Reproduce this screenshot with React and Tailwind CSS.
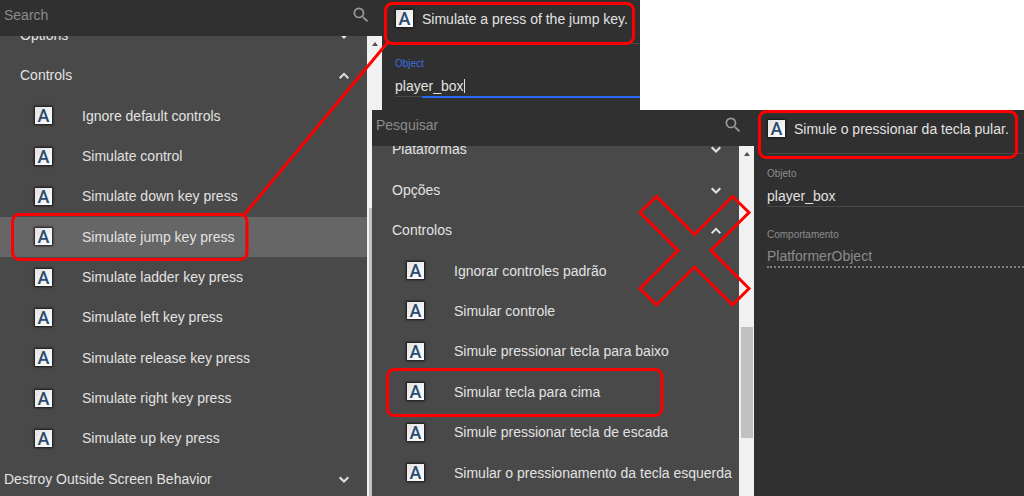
import React from 'react';
import { MdSearch } from 'react-icons/md';

const englishRows = [
  { label: 'Options', type: 'group' },
  { label: 'Controls', type: 'group', open: true },
  { label: 'Ignore default controls' },
  { label: 'Simulate control' },
  { label: 'Simulate down key press' },
  { label: 'Simulate jump key press', selected: true },
  { label: 'Simulate ladder key press' },
  { label: 'Simulate left key press' },
  { label: 'Simulate release key press' },
  { label: 'Simulate right key press' },
  { label: 'Simulate up key press' },
  { label: 'Destroy Outside Screen Behavior', type: 'root' },
];

const portugueseRows = [
  { label: 'Plataformas', type: 'group' },
  { label: 'Opções', type: 'group' },
  { label: 'Controlos', type: 'group', open: true },
  { label: 'Ignorar controles padrão' },
  { label: 'Simular controle' },
  { label: 'Simule pressionar tecla para baixo' },
  { label: 'Simular tecla para cima' },
  { label: 'Simule pressionar tecla de escada' },
  { label: 'Simular o pressionamento da tecla esquerda' },
];

const PlatformerIcon = () => (
  <span
    aria-hidden="true"
    className="flex h-[17px] w-[17px] shrink-0 items-center justify-center bg-gradient-to-br from-[#e2e2e2] to-white font-['Roboto',sans-serif] text-[18px] leading-[17px] font-medium text-[#2b4b70] shadow-[0_0_2px_1px_#181818]"
  >
    A
  </span>
);

const Chevron = ({ open }) => (
  <svg width="20" height="20" viewBox="0 0 20 20" fill="none" stroke="currentColor" strokeWidth="2" aria-hidden="true">
    <path d={open ? 'M5.7 13.2 10 8.9l4.3 4.3' : 'M5.7 8.2l4.3 4.3 4.3-4.3'} />
  </svg>
);

const Row = ({ label, type, open, selected }) => {
  if (type) {
    return (
      <li className="flex">
        <button
          type="button"
          aria-expanded={Boolean(open)}
          className={`flex flex-1 items-center justify-between pr-[13px] text-left ${type === 'root' ? 'pl-1' : 'pl-5'}`}
        >
          {label}
          <Chevron open={open} />
        </button>
      </li>
    );
  }

  return (
    <li className={`flex ${selected ? 'bg-[#666666]' : ''}`}>
      <button type="button" className="flex flex-1 items-center gap-[30px] pl-[35px] text-left whitespace-nowrap">
        <PlatformerIcon />
        {label}
      </button>
    </li>
  );
};

const InstructionList = ({ id, placeholder, rows, listClass, thumbClass }) => (
  <section className="flex w-[382px] shrink-0 flex-col">
    {/* Search */}
    <div className="z-10 flex h-9 shrink-0 items-center bg-[#303030] pr-[11px] pb-[6px] pl-1">
      <input
        id={id}
        type="text"
        aria-label={placeholder}
        placeholder={placeholder}
        className="h-5 min-w-0 flex-1 bg-transparent outline-none placeholder:text-[#8c8c8c]"
      />
      <MdSearch size={20} className="text-[#9a9a9a]" />
    </div>

    {/* Instructions */}
    <div className="flex min-h-0 flex-1 overflow-hidden bg-[#494949]">
      <ul className={`grid flex-1 auto-rows-fr ${listClass}`}>
        {rows.map((row) => (
          <Row key={row.label} {...row} />
        ))}
      </ul>
      <div className="flex w-[15px] flex-col items-center bg-[#f1f1f1]">
        <span className="mt-[6px] h-0 w-0 border-x-[3px] border-b-[4px] border-x-transparent border-b-[#505050]" />
        <span className={`w-[12px] bg-[#c1c1c1] ${thumbClass}`} />
      </div>
    </div>
  </section>
);

const Sentence = ({ children }) => (
  <h2 className="flex h-[44px] items-start gap-[9px] border-b border-[#484848] pt-[10px] pl-px leading-[18px] whitespace-nowrap">
    <PlatformerIcon />
    {children}
  </h2>
);

const App = () => {
  return (
    <main className="relative flex min-h-screen overflow-hidden bg-white font-['Liberation_Sans',Arial,sans-serif] text-[14px] leading-5 text-[#e2e2e2]">
      {/* English window */}
      <div className="flex w-5/8 bg-[#303030]">
        <InstructionList
          id="search-en"
          placeholder="Search"
          rows={englishRows}
          listClass="-mt-[21px] h-[484px]"
          thumbClass="mt-[162px] flex-1"
        />
        <section className="min-w-0 flex-1 pl-[13px]">
          <Sentence>Simulate a press of the jump key.</Sentence>
          <label htmlFor="object-en" className="mt-[14px] block text-[10px] leading-3 text-[#3a6fe0]">
            Object
          </label>
          <div className="mt-[5px] flex h-[22px] items-center border-b border-[#484848]">
            <input id="object-en" type="text" defaultValue="player_box" className="field-sizing-content bg-transparent outline-none" />
            <span className="h-[14px] w-px bg-[#e2e2e2]" />
          </div>
          <div className="-mt-px ml-[27px] h-[2px] bg-[#2b6af5]" />
        </section>
      </div>

      {/* Portuguese window, in front */}
      <div className="absolute top-[110px] right-0 bottom-0 left-[372px] flex bg-[#303030]">
        <InstructionList
          id="search-pt"
          placeholder="Pesquisar"
          rows={portugueseRows}
          listClass="-mt-[17px] h-[364px]"
          thumbClass="mt-[171px] h-[111px]"
        />
        <section className="min-w-0 flex-1 pl-[13px]">
          <Sentence>Simule o pressionar da tecla pular.</Sentence>
          <label htmlFor="object-pt" className="mt-[14px] block text-[10px] leading-3 text-[#8c8c8c]">
            Objeto
          </label>
          <input
            id="object-pt"
            type="text"
            defaultValue="player_box"
            className="mt-[5px] block h-[22px] w-full border-b border-[#484848] bg-transparent outline-none"
          />
          <label htmlFor="behavior-pt" className="mt-[22px] block text-[10px] leading-3 text-[#8c8c8c]">
            Comportamento
          </label>
          <input
            id="behavior-pt"
            type="text"
            disabled
            defaultValue="PlatformerObject"
            className="mt-[5px] block h-[22px] w-full border-b-2 border-dotted border-[#808080] bg-transparent text-[#8c8c8c]"
          />
        </section>
      </div>

      {/* Red marker annotations */}
      <svg
        aria-hidden="true"
        width="1024"
        height="496"
        viewBox="0 0 1024 496"
        fill="none"
        stroke="#ff0000"
        strokeWidth="3"
        className="pointer-events-none absolute top-0 left-0 z-20"
      >
        <rect x="385.5" y="3.5" width="248" height="40" rx="7" />
        <rect x="12.5" y="214.5" width="234.5" height="45" rx="7" />
        <rect x="759.5" y="111.5" width="257" height="46" rx="7" />
        <rect x="387.5" y="369.5" width="274.5" height="46" rx="7" />
        <path d="M388 42 244 215" />
        <path d="M656.5 196.5 694.5 234.5 732.5 196.5 749 212.5 711 250.5 749 288.5 732.5 305 694.5 267 656.5 305 640 288.5 678 250.5 640 212.5Z" />
      </svg>
    </main>
  );
};

export default App;
